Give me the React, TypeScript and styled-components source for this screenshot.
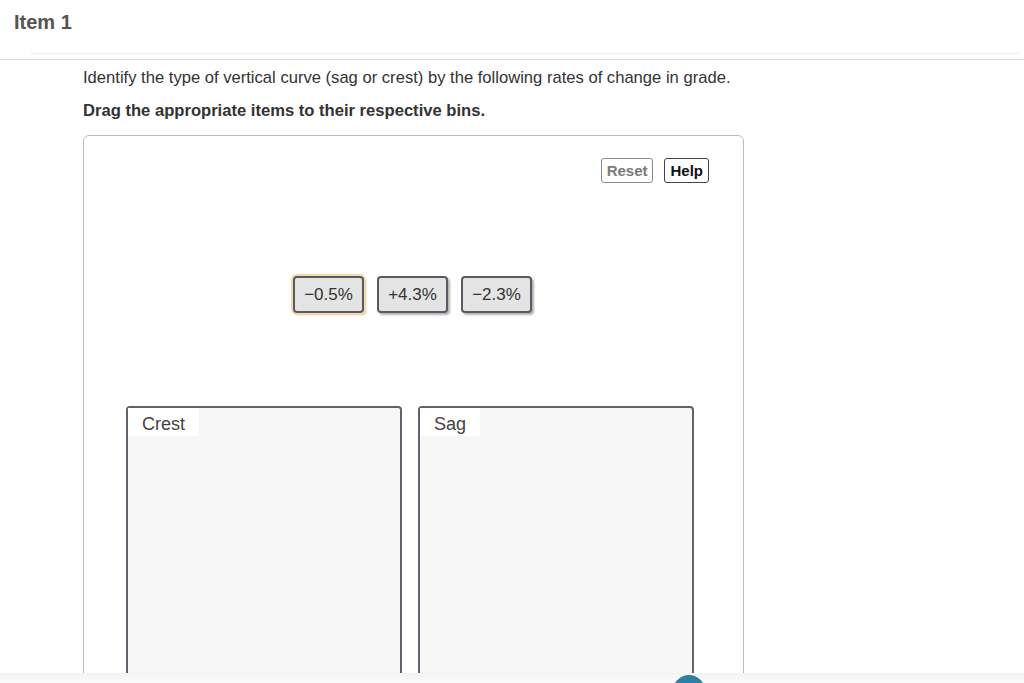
import React from 'react';
import styled, { createGlobalStyle } from 'styled-components';

const GlobalStyle = createGlobalStyle`
  html, body {
    margin: 0;
    padding: 0;
    background: #fff;
    font-family: "Liberation Sans", Arial, sans-serif;
    color: #333;
    overflow: hidden;
  }
`;

const Page = styled.div`
  width: 1024px;
  height: 683px;
  overflow: hidden;
  position: relative;
`;

const Header = styled.div`
  padding: 10px 14px 0;
  height: 42px;
  box-sizing: border-box;
`;

const Title = styled.h2`
  margin: 0;
  font-size: 20px;
  font-weight: bold;
  color: #555;
  line-height: 24px;
`;

const Band = styled.div`
  margin: 10px 4px 0 31px;
  height: 3px;
  background: #f7f7f7;
`;

const Rule = styled.div`
  margin-top: 4px;
  height: 1px;
  background: #dcdcdc;
`;

const Content = styled.div`
  padding: 8px 0 0 83px;
`;

const Prompt = styled.p`
  margin: 0;
  font-size: 16.6px;
  line-height: 20px;
  color: #333;
`;

const Instruction = styled.p`
  margin: 13px 0 0;
  font-size: 16.6px;
  line-height: 20px;
  font-weight: bold;
  color: #333;
`;

const Board = styled.div`
  margin-top: 14px;
  width: 661px;
  height: 600px;
  box-sizing: border-box;
  border: 1px solid #bdbdbd;
  border-radius: 6px;
  padding: 22px 34px 0 42px;
`;

const Toolbar = styled.div`
  display: flex;
  justify-content: flex-end;
  gap: 11px;
`;

const ToolButton = styled.button<{ $muted?: boolean }>`
  font-family: "Liberation Sans", Arial, sans-serif;
  font-size: 15px;
  font-weight: bold;
  height: 25px;
  padding: 0 5px;
  background: #fff;
  border: 1px solid ${p => (p.$muted ? '#8a8a8a' : '#444')};
  border-radius: 3px;
  color: ${p => (p.$muted ? '#7a7a7a' : '#111')};
`;

const Tray = styled.div`
  display: flex;
  justify-content: center;
  gap: 13px;
  margin-top: 93px;
  padding-right: 10px;
`;

const Tile = styled.div<{ $focus?: boolean }>`
  width: 71px;
  height: 37px;
  box-sizing: border-box;
  display: flex;
  align-items: center;
  justify-content: center;
  background: #e4e4e4;
  border: 2px solid #5a5a66;
  border-radius: 4px;
  box-shadow: ${p =>
    p.$focus
      ? '0 0 0 2px #f8d9a4, 2px 2px 2px rgba(0,0,0,0.25)'
      : '2px 2px 2px rgba(0,0,0,0.3)'};
  font-size: 17px;
  color: #333;
`;

const Bins = styled.div`
  display: flex;
  gap: 16px;
  margin-top: 93px;
`;

const Bin = styled.div`
  width: 276px;
  height: 300px;
  box-sizing: border-box;
  border: 2px solid #62626e;
  border-radius: 4px;
  background: #f6f6f6;
`;

const BinLabel = styled.div`
  display: inline-block;
  background: #fff;
  padding: 6px 14px 2px 14px;
  font-size: 18px;
  line-height: 20px;
  color: #444;
`;

const Footer = styled.div`
  position: absolute;
  left: 0;
  right: 0;
  bottom: 0;
  height: 10px;
  background: linear-gradient(#f4f4f4, #fafafa);
  overflow: hidden;
`;

const Bubble = styled.div`
  position: absolute;
  left: 673px;
  top: 2px;
  width: 32px;
  height: 32px;
  border-radius: 50%;
  background: #2e7fa3;
`;

const tiles = [
  { label: '\u22120.5%', focus: true },
  { label: '+4.3%' },
  { label: '\u22122.3%' },
];

export default function App() {
  return (
    <Page>
      <GlobalStyle />
      <Header>
        <Title>Item 1</Title>
      </Header>
      <Band />
      <Rule />
      <Content>
        <Prompt>
          Identify the type of vertical curve (sag or crest) by the following rates of change in grade.
        </Prompt>
        <Instruction>Drag the appropriate items to their respective bins.</Instruction>
        <Board>
          <Toolbar>
            <ToolButton $muted>Reset</ToolButton>
            <ToolButton>Help</ToolButton>
          </Toolbar>
          <Tray>
            {tiles.map(t => (
              <Tile key={t.label} $focus={t.focus}>
                {t.label}
              </Tile>
            ))}
          </Tray>
          <Bins>
            <Bin>
              <BinLabel>Crest</BinLabel>
            </Bin>
            <Bin>
              <BinLabel>Sag</BinLabel>
            </Bin>
          </Bins>
        </Board>
      </Content>
      <Footer>
        <Bubble />
      </Footer>
    </Page>
  );
}
